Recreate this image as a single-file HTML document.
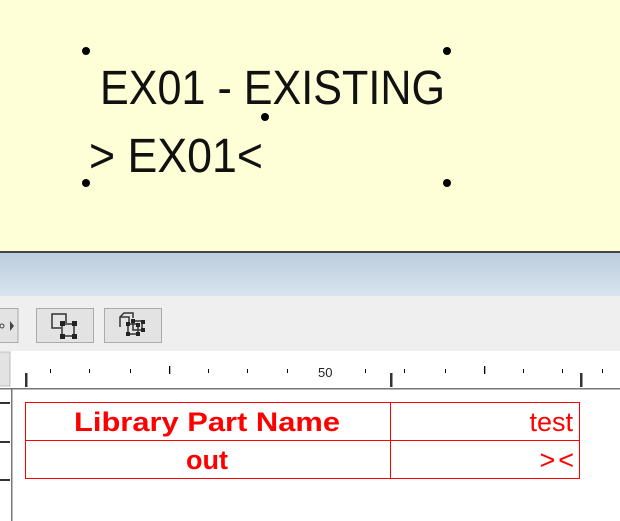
<!DOCTYPE html>
<html><head><style>
html,body{margin:0;padding:0;width:620px;height:521px;overflow:hidden;background:#fff}
svg{display:block}
</style></head><body>
<svg width="620" height="521" xmlns="http://www.w3.org/2000/svg" font-family="Liberation Sans, DejaVu Sans, sans-serif">
<defs><linearGradient id="g" x1="0" y1="0" x2="0" y2="1"><stop offset="0" stop-color="#bccddd"/><stop offset="1" stop-color="#d8e4f0"/></linearGradient></defs>
<rect x="0" y="0" width="620" height="251" fill="#ffffd7"/>
<rect x="0" y="251" width="620" height="2" fill="#444"/>
<rect x="0" y="253" width="620" height="43" fill="url(#g)"/>
<rect x="0" y="296" width="620" height="55" fill="#efefef"/>
<text x="100" y="104" font-size="48" textLength="345" lengthAdjust="spacingAndGlyphs" fill="#111">EX01 - EXISTING</text>
<text x="89" y="172" font-size="48" textLength="174" lengthAdjust="spacingAndGlyphs" fill="#111">&gt; EX01&lt;</text>
<g fill="#000"><circle cx="86" cy="51" r="4"/><circle cx="447" cy="51" r="4"/><circle cx="265" cy="117" r="4"/><circle cx="86" cy="183" r="4"/><circle cx="447" cy="183" r="4"/></g>
<!-- toolbar -->
<rect x="-10" y="308.5" width="28" height="34" fill="#e3e3e3" stroke="#aaa"/>
<circle cx="2" cy="326" r="2" fill="none" stroke="#444"/>
<polygon points="10,321 14,326 10,331" fill="#444"/>
<rect x="36.5" y="308.5" width="57" height="34" fill="#e3e3e3" stroke="#aaa"/>
<g stroke="#333" stroke-width="1.5" fill="none"><path d="M66,323 V314 H52 V328 H61"/><rect x="62" y="324" width="12" height="12"/></g>
<g fill="#222"><rect x="60" y="321" width="5" height="5"/><rect x="72" y="321" width="5" height="5"/><rect x="60" y="334" width="5" height="5"/><rect x="72" y="334" width="5" height="5"/></g>
<rect x="104.5" y="308.5" width="57" height="34" fill="#e3e3e3" stroke="#aaa"/>
<g stroke="#333" stroke-width="1.5" fill="none"><path d="M120,327 V317 L124,313 H133 V318 M120,317 H129 V322"/><rect x="128" y="324" width="10" height="10"/><rect x="133" y="321" width="9" height="9"/></g>
<g fill="#222"><rect x="126" y="322" width="4" height="4"/><rect x="131" y="319" width="4" height="4"/><rect x="141" y="320" width="4" height="4"/><rect x="136" y="323" width="4" height="4"/><rect x="126" y="332" width="4" height="4"/><rect x="136" y="332" width="4" height="4"/><rect x="141" y="328" width="4" height="4"/></g>
<!-- ruler -->
<rect x="0" y="351" width="620" height="170" fill="#fff"/>
<rect x="-1" y="352" width="11" height="34" fill="#e3e3e3" stroke="#bbb"/>
<g fill="#000"><rect x="50" y="369" width="1" height="4"/><rect x="89" y="369" width="1" height="4"/><rect x="130" y="369" width="1" height="4"/><rect x="169" y="366" width="1.3" height="8"/><rect x="208" y="369" width="1" height="4"/><rect x="247" y="369" width="1" height="4"/><rect x="287" y="369" width="1" height="4"/><rect x="365" y="369" width="1" height="4"/><rect x="404" y="369" width="1" height="4"/><rect x="445" y="369" width="1" height="4"/><rect x="484" y="366" width="1.3" height="8"/><rect x="523" y="369" width="1" height="4"/><rect x="562" y="369" width="1" height="4"/><rect x="602" y="369" width="1" height="4"/></g>
<g fill="#333"><rect x="25" y="373" width="2.5" height="14"/><rect x="390" y="373" width="2.5" height="14"/><rect x="580" y="373" width="2.5" height="14"/></g>
<text x="318" y="377" font-size="13" fill="#222">50</text>
<rect x="0" y="388" width="620" height="1.5" fill="#777"/>
<rect x="11" y="388" width="1.5" height="133" fill="#777"/>
<g fill="#333"><rect x="0" y="402" width="10" height="2"/><rect x="0" y="441" width="10" height="2"/><rect x="0" y="479" width="10" height="2"/></g>
<!-- table -->
<g stroke="#f00" stroke-width="1" fill="none"><rect x="25.5" y="402.5" width="554" height="76"/><line x1="25" y1="440.5" x2="580" y2="440.5"/><line x1="390.5" y1="402" x2="390.5" y2="478"/></g>
<g fill="#f00" font-size="27"><text x="207" y="431" text-anchor="middle" font-weight="bold" textLength="266" lengthAdjust="spacingAndGlyphs">Library Part Name</text>
<text x="207" y="469" text-anchor="middle" font-weight="bold">out</text>
<text x="573" y="431" text-anchor="end">test</text>
<text x="577" y="469" text-anchor="end" letter-spacing="3">&gt;&lt;</text></g>
</svg>
</body></html>
